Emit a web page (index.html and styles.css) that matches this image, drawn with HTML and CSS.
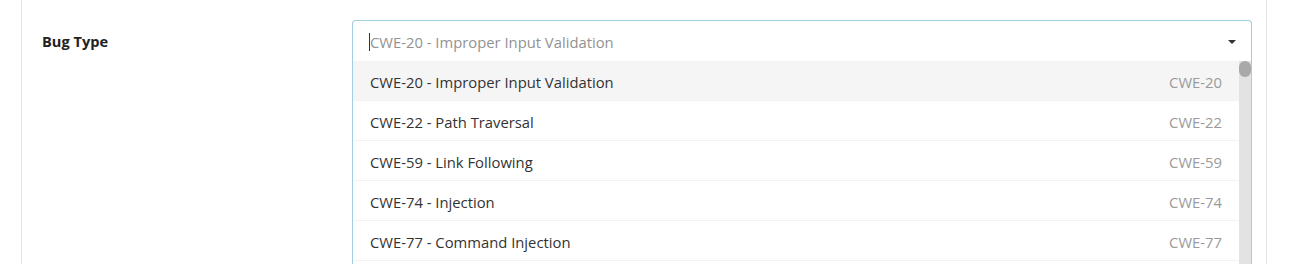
FILE: index.html
```html
<!DOCTYPE html>
<html>
<head>
<meta charset="utf-8">
<link rel="stylesheet" href="styles.css">
</head>
<body>
<div class="card">
  <div class="field">
    <label class="label">Bug Type</label>
    <div class="select">
      <div class="control">
        <span class="caret"></span><span class="placeholder">CWE-20 - Improper Input Validation</span>
        <span class="arrow"></span>
      </div>
      <div class="menu">
        <ul class="options">
          <li class="option active"><span>CWE-20 - Improper Input Validation</span><span class="code">CWE-20</span></li>
          <li class="option"><span>CWE-22 - Path Traversal</span><span class="code">CWE-22</span></li>
          <li class="option"><span>CWE-59 - Link Following</span><span class="code">CWE-59</span></li>
          <li class="option"><span>CWE-74 - Injection</span><span class="code">CWE-74</span></li>
          <li class="option"><span>CWE-77 - Command Injection</span><span class="code">CWE-77</span></li>
        </ul>
        <div class="scrollbar"><div class="thumb"></div></div>
      </div>
    </div>
  </div>
</div>
</body>
</html>
```
FILE: styles.css
```css
html, body {
  margin: 0;
  padding: 0;
  background: #fff;
  height: 264px;
  overflow: hidden;
}
body {
  font-family: "Open Sans", "Noto Sans", sans-serif;
  font-size: 14.8px;
  color: #333;
}
.card {
  margin-left: 21px;
  width: 1246px;
  height: 264px;
  border-left: 1px solid #e3e3e3;
  border-right: 1px solid #e3e3e3;
  box-sizing: border-box;
  padding-top: 20px;
}
.field {
  display: flex;
  align-items: flex-start;
}
.label {
  width: 310px;
  padding-left: 20px;
  font-weight: 700;
  color: #222;
  line-height: 43px;
  font-size: 14.6px;
}
.select {
  width: 898px;
  border: 1px solid #a3cde0;
  border-bottom: none;
  border-radius: 4px 4px 0 0;
}
.control {
  height: 40px;
  display: flex;
  align-items: center;
  padding-left: 16px;
  padding-right: 15px;
  padding-top: 1px;
  box-sizing: border-box;
}
.caret {
  width: 1px;
  height: 18px;
  background: #333;
}
.placeholder {
  color: #929292;
  flex: 1;
}
.arrow {
  width: 0;
  height: 0;
  border-left: 4px solid transparent;
  border-right: 4px solid transparent;
  border-top: 4px solid #333;
}
.menu {
  display: flex;
}
.options {
  list-style: none;
  margin: 0;
  padding: 0;
  flex: 1;
}
.option {
  height: 39px;
  border-bottom: 1px solid #f2f2f2;
  display: flex;
  align-items: center;
  justify-content: space-between;
  padding: 3px 17px 0 17px;
  box-sizing: content-box;
  height: 36px;
  color: #333;
}
.option.active {
  background: #f5f5f5;
}
.code {
  color: #9a9a9a;
}
.scrollbar {
  width: 12px;
  background: #e3e3e3;
  height: 210px;
}
.thumb {
  height: 16px;
  border-radius: 6px;
  background: #a9a9a9;
}
```
